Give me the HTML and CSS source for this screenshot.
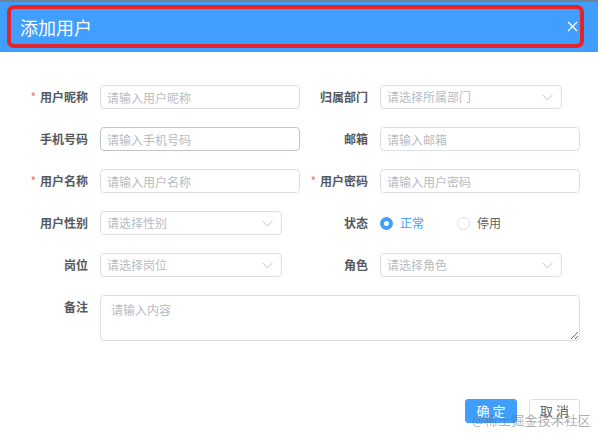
FILE: index.html
```html
<!DOCTYPE html>
<html lang="zh-CN">
<head>
<meta charset="utf-8">
<title>添加用户</title>
<link rel="stylesheet" href="styles.css">
</head>
<body>
<div class="dialog">
  <div class="header">
    <div class="title-box">
      <span class="title">添加用户</span>
      <svg class="close" width="11" height="11" viewBox="0 0 11 11"><path d="M1 1L10 10M10 1L1 10" stroke="#fff" stroke-width="1.3" fill="none"/></svg>
    </div>
  </div>
  <div class="body">
    <div class="grid">
      <div class="item">
        <label class="label"><span class="req">*</span>用户昵称</label>
        <input class="input" placeholder="请输入用户昵称">
      </div>
      <div class="item">
        <label class="label">归属部门</label>
        <div class="select"><span class="ph">请选择所属部门</span><svg class="arrow" width="11" height="7" viewBox="0 0 11 7"><path d="M0.5 0.8L5.5 5.8L10.5 0.8" stroke="#c0c4cc" stroke-width="1" fill="none"/></svg></div>
      </div>
      <div class="item">
        <label class="label">手机号码</label>
        <input class="input hover" placeholder="请输入手机号码">
      </div>
      <div class="item">
        <label class="label">邮箱</label>
        <input class="input" placeholder="请输入邮箱">
      </div>
      <div class="item">
        <label class="label"><span class="req">*</span>用户名称</label>
        <input class="input" placeholder="请输入用户名称">
      </div>
      <div class="item">
        <label class="label"><span class="req">*</span>用户密码</label>
        <input class="input" placeholder="请输入用户密码">
      </div>
      <div class="item">
        <label class="label">用户性别</label>
        <div class="select"><span class="ph">请选择性别</span><svg class="arrow" width="11" height="7" viewBox="0 0 11 7"><path d="M0.5 0.8L5.5 5.8L10.5 0.8" stroke="#c0c4cc" stroke-width="1" fill="none"/></svg></div>
      </div>
      <div class="item">
        <label class="label">状态</label>
        <div class="radios">
          <span class="radio checked"><span class="dot"></span><span class="rtext">正常</span></span>
          <span class="radio"><span class="dot"></span><span class="rtext">停用</span></span>
        </div>
      </div>
      <div class="item">
        <label class="label">岗位</label>
        <div class="select"><span class="ph">请选择岗位</span><svg class="arrow" width="11" height="7" viewBox="0 0 11 7"><path d="M0.5 0.8L5.5 5.8L10.5 0.8" stroke="#c0c4cc" stroke-width="1" fill="none"/></svg></div>
      </div>
      <div class="item">
        <label class="label">角色</label>
        <div class="select"><span class="ph">请选择角色</span><svg class="arrow" width="11" height="7" viewBox="0 0 11 7"><path d="M0.5 0.8L5.5 5.8L10.5 0.8" stroke="#c0c4cc" stroke-width="1" fill="none"/></svg></div>
      </div>
      <div class="item wide">
        <label class="label">备注</label>
        <textarea class="textarea" placeholder="请输入内容"></textarea>
      </div>
    </div>
  </div>
  <div class="footer">
    <button class="btn primary">确 定</button>
    <button class="btn">取 消</button>
    <span class="watermark">@稀土掘金技术社区</span>
  </div>
</div>
</body>
</html>
```
FILE: styles.css
```css
* { box-sizing: border-box; }
html, body { margin: 0; padding: 0; background: #fff; }
body {
  font-family: "Noto Sans CJK SC", "Liberation Sans", sans-serif;
  font-size: 12px;
  color: #606266;
}
.dialog { width: 598px; height: 441px; position: relative; background: #fff; }
.header {
  background: #409eff;
  border-top: 2px solid #6f8396;
  padding: 3px 14px 4px 7px;
  height: 52px;
}
.title-box {
  height: 43px;
  border: 4px solid #e3252b;
  border-radius: 7px;
  display: flex;
  align-items: center;
  justify-content: space-between;
  padding: 0 2px 0 9px;
}
.title { color: #fff; font-size: 18px; line-height: 24px; }
.close { display: block; }
.body { padding: 33px 18px 0 20px; }
.grid {
  display: grid;
  grid-template-columns: 280px 280px;
  row-gap: 18px;
}
.item { display: flex; align-items: flex-start; height: 24px; }
.item.wide { grid-column: 1 / 3; height: 46px; }
.label {
  width: 80px;
  padding-right: 12px;
  text-align: right;
  font-weight: bold;
  line-height: 24px;
  color: #56585c;
  font-size: 12px;
  white-space: nowrap;
}
.req { color: #f56c6c; margin-right: 4px; font-weight: normal; }
.input {
  width: 200px;
  height: 24px;
  border: 1px solid #dcdfe6;
  border-radius: 4px;
  padding: 0 6px;
  font-family: inherit;
  font-size: 12px;
  color: #606266;
  outline: none;
}
.input.hover { border-color: #c0c4cc; }
.input::placeholder, .textarea::placeholder { color: #b8bbc1; }
.select {
  width: 182px;
  height: 24px;
  border: 1px solid #dcdfe6;
  border-radius: 4px;
  padding: 0 8px 0 6px;
  display: flex;
  align-items: center;
  justify-content: space-between;
}
.ph { color: #b8bbc1; line-height: 22px; }
.arrow { display: block; }
.radios { display: flex; align-items: center; height: 24px; }
.radio { display: flex; align-items: center; margin-right: 33px; }
.dot {
  width: 13px; height: 13px;
  border: 1px solid #dcdfe6;
  border-radius: 50%;
  background: #fff;
  margin-right: 7px;
}
.radio.checked .dot { border: 4px solid #409eff; background: #fff; }
.radio.checked .rtext { color: #409eff; }
.rtext { color: #606266; line-height: 24px; }
.textarea {
  width: 480px;
  height: 46px;
  border: 1px solid #dcdfe6;
  border-radius: 4px;
  padding: 5px 10px;
  font-family: inherit;
  font-size: 12px;
  resize: vertical;
  outline: none;
  margin: 0;
}
.footer {
  display: flex;
  justify-content: flex-end;
  gap: 12px;
  padding: 58px 18px 0 0;
}
.btn {
  width: 51px;
  height: 24px;
  border: 1px solid #dcdfe6;
  border-radius: 3px;
  background: #fff;
  color: #606266;
  font-family: inherit;
  font-size: 13px;
  padding: 0;
  line-height: 22px;
}
.btn.primary { width: 52px; background: #409eff; border-color: #409eff; color: #fff; }
.watermark {
  position: absolute;
  left: 472px;
  top: 410px;
  font-size: 13px;
  line-height: 20px;
  color: rgba(110, 110, 110, 0.55);
  letter-spacing: 0.3px;
  white-space: nowrap;
}
```
